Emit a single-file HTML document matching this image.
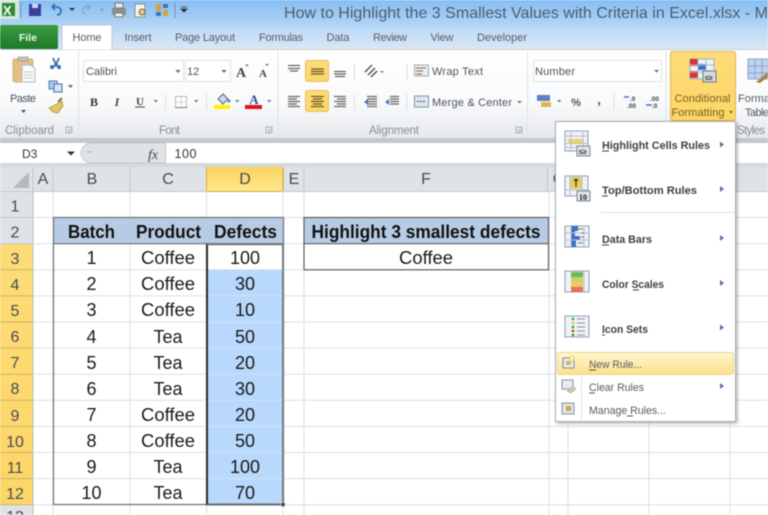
<!DOCTYPE html>
<html><head><meta charset="utf-8"><style>
html,body{margin:0;padding:0;background:#fff;overflow:hidden}
svg{display:block;filter:blur(.4px)}
text{font-family:"Liberation Sans",sans-serif}
.r{font-size:11px;fill:#4c535c}
.l{font-size:11.5px;fill:#8a9098}
.tab{font-size:11px;fill:#5a6068;text-anchor:middle}
.h{font-size:16px;fill:#444b53;text-anchor:middle}
.c{font-size:18px;fill:#1a1a1a;text-anchor:middle}
.b{font-size:18px;font-weight:bold;fill:#111;text-anchor:middle}
.m{font-size:11px;font-weight:bold;fill:#3c4148}
.n{font-size:11px;fill:#555b63}
.g{stroke:#dcdfe3;stroke-width:1;fill:none}
.ln{stroke:#666;stroke-width:1.2}
.ic{fill:#eef2f7;stroke:#8fa0b4}
.il{stroke:#b4c0ce;fill:none}
</style></head><body>
<svg width="768" height="515" viewBox="0 0 768 515" xmlns="http://www.w3.org/2000/svg">
<defs>
<linearGradient id="tb" x1="0" y1="0" x2="0" y2="1"><stop offset="0" stop-color="#86bef3"/><stop offset=".35" stop-color="#a3cdf5"/><stop offset=".65" stop-color="#c3dcf6"/><stop offset="1" stop-color="#dbe8f6"/></linearGradient>
<linearGradient id="rb" x1="0" y1="0" x2="0" y2="1"><stop offset="0" stop-color="#ffffff"/><stop offset=".6" stop-color="#f9fafb"/><stop offset="1" stop-color="#e6e9ed"/></linearGradient>
<linearGradient id="gold" x1="0" y1="0" x2="0" y2="1"><stop offset="0" stop-color="#fddc78"/><stop offset="1" stop-color="#fdd667"/></linearGradient>
<linearGradient id="gh" x1="0" y1="0" x2="0" y2="1"><stop offset="0" stop-color="#fcd25f"/><stop offset="1" stop-color="#ffe98d"/></linearGradient>
<linearGradient id="hv" x1="0" y1="0" x2="0" y2="1"><stop offset="0" stop-color="#fff6d2"/><stop offset="1" stop-color="#fde08a"/></linearGradient>
<linearGradient id="gr" x1="0" y1="0" x2="0" y2="1"><stop offset="0" stop-color="#3c9a3e"/><stop offset="1" stop-color="#1d7a2a"/></linearGradient>
<filter id="sh" x="-5%" y="-5%" width="115%" height="115%"><feDropShadow dx="1.5" dy="1.5" stdDeviation="1.5" flood-color="#000" flood-opacity=".3"/></filter>
</defs>

<!-- title + tabs background -->
<rect x="0" y="0" width="768" height="50" fill="url(#tb)"/>
<rect x="0" y="0" width="19" height="19" fill="#d8e8d8"/>
<rect x="2" y="3" width="13" height="13" fill="#2d8a3c"/>
<text x="3" y="15" font-size="13" font-weight="bold" fill="#fff">X</text>
<line x1="21" y1="2" x2="21" y2="18" stroke="#6e93b8"/>
<rect x="29" y="4" width="12" height="12" fill="#3b3f9c"/><rect x="32" y="4" width="6" height="4" fill="#cdd4ee"/>
<path d="M52 7 h5 a4 4 0 0 1 0 8 M52 7 l3-3 M52 7 l3 3" stroke="#3a6db5" stroke-width="1.8" fill="none"/>
<path d="M69 8 l6 0 l-3 3z" fill="#333"/>
<path d="M90 7 h-4 a3.5 3.5 0 0 0 0 7 M90 7 l-3-3 M90 7 l-3 3" stroke="#8ba6be" stroke-width="1.5" fill="none"/>
<path d="M100 9 l4 0 l-2 2z" fill="#7d93a8"/>
<rect x="112" y="8" width="14" height="7" fill="#8a8f96"/><rect x="115" y="3" width="8" height="5" fill="#e8e8e8" stroke="#777"/><rect x="115" y="13" width="8" height="4" fill="#eee" stroke="#777"/>
<rect x="135" y="4" width="10" height="13" fill="#f4f4f4" stroke="#8a8a8a"/><circle cx="142" cy="12" r="3" fill="#e5c884" stroke="#77654a"/>
<rect x="156" y="4" width="5" height="7" fill="#d6a23c"/><rect x="163" y="4" width="5" height="4" fill="#3f74b8"/><rect x="156" y="12" width="5" height="4" fill="#3f74b8"/><rect x="163" y="10" width="5" height="6" fill="#d6a23c"/>
<line x1="175" y1="3" x2="175" y2="18" stroke="#6e93b8"/>
<path d="M181 7 h6 M181 9 l6 0 l-3 3z" stroke="#333" fill="#333" stroke-width=".8"/>
<text x="284" y="18" font-size="16" fill="#4f5c6b" textLength="484" lengthAdjust="spacingAndGlyphs">How to Highlight the 3 Smallest Values with Criteria in Excel.xlsx  -  M</text>

<!-- tabs -->
<rect x="0" y="25" width="58" height="24" rx="2" fill="url(#gr)"/>
<text x="28" y="41" font-size="10.5" font-weight="bold" fill="#eef6ee" text-anchor="middle">File</text>
<path d="M62 50 V27 a2 2 0 0 1 2-2 H110 a2 2 0 0 1 2 2 V50z" fill="#fff" stroke="#bccad8"/>
<text class="tab" x="87" y="41" textLength="29">Home</text>
<text class="tab" x="138" y="41" textLength="27">Insert</text>
<text class="tab" x="205" y="41" textLength="60">Page Layout</text>
<text class="tab" x="281" y="41" textLength="44">Formulas</text>
<text class="tab" x="338" y="41" textLength="23">Data</text>
<text class="tab" x="390" y="41" textLength="34">Review</text>
<text class="tab" x="442" y="41" textLength="23">View</text>
<text class="tab" x="502" y="41" textLength="50">Developer</text>

<!-- ribbon -->
<rect x="0" y="50" width="768" height="88" fill="url(#rb)"/>
<line x1="112" y1="49.5" x2="768" y2="49.5" stroke="#c6ced6"/>
<line x1="0" y1="49.5" x2="62" y2="49.5" stroke="#c6ced6"/>
<rect x="0" y="138" width="768" height="5" fill="#c5c8cc"/>
<g stroke="#dfe2e6"><line x1="78.5" y1="51" x2="78.5" y2="137"/><line x1="278" y1="51" x2="278" y2="137"/><line x1="527.5" y1="51" x2="527.5" y2="137"/><line x1="666" y1="51" x2="666" y2="137"/></g>

<!-- clipboard -->
<rect x="13" y="59" width="20" height="23" rx="2" fill="#e6c083" stroke="#cdae78"/>
<rect x="18" y="57" width="10" height="4" fill="#bfc3c8" stroke="#8d8f92" stroke-width=".6"/>
<path d="M22 65 h9 l4 4 v13 h-13z" fill="#fafafa" stroke="#b4b8bd"/>
<g stroke="#c2c6cb"><line x1="24" y1="72" x2="33" y2="72"/><line x1="24" y1="75" x2="33" y2="75"/><line x1="24" y1="78" x2="33" y2="78"/></g>
<text class="r" x="23" y="102" text-anchor="middle" font-size="11.5" textLength="26">Paste</text>
<path d="M21 110 h5 l-2.500 3z" fill="#555"/>
<path d="M53 58 l3 7 l3-7 M52 69 l4-5 l4 5" stroke="#3d5f9f" stroke-width="1.6" fill="none"/>
<circle cx="52" cy="67" r="2" fill="#3d6fb5"/><circle cx="59" cy="67" r="2" fill="#3d6fb5"/>
<rect x="49" y="81" width="8" height="8" fill="#a9c6e6" stroke="#4f7fb5"/><rect x="54" y="84" width="8" height="8" fill="#d5e5f5" stroke="#3f6fae"/>
<path d="M68 85 h5 l-2.500 3z" fill="#666"/>
<path d="M49 108 l8-4 l5-3 l1 5 l-5 7 l-5-1z" fill="#e3c468" stroke="#a98d3f" stroke-width=".7"/>
<path d="M58 102 l4-4" stroke="#8a6f4a" stroke-width="2"/>
<text class="l" x="5" y="134" textLength="49" lengthAdjust="spacingAndGlyphs">Clipboard</text>
<path d="M66 127 h6 v6 h-6z M69 130 h3 v3 h-3z" fill="#e4e6e9" stroke="#9aa0a6" stroke-width=".7"/>

<!-- font -->
<rect x="83.500" y="60.500" width="100" height="21" fill="#fff" stroke="#dfe2e5"/>
<rect x="185.500" y="60.500" width="45" height="21" fill="#fff" stroke="#dfe2e5"/>
<text class="r" x="86" y="75" font-size="11.500" fill="#444" textLength="31">Calibri</text>
<text class="r" x="187" y="75" font-size="11.500" fill="#444">12</text>
<path d="M175.500 70 h5 l-2.500 3z M221.500 70 h5 l-2.500 3z" fill="#666"/>
<text x="241" y="77" font-size="14" font-weight="bold" fill="#444" text-anchor="middle" style="font-family:'Liberation Serif'">A</text>
<text x="263" y="77" font-size="11" font-weight="bold" fill="#444" text-anchor="middle" style="font-family:'Liberation Serif'">A</text>
<path d="M245 66 l2-2 l2 2z M265 64 l2 2 l2-2z" fill="#3a78c2"/>
<text x="94" y="106" font-size="12" font-weight="bold" fill="#333" text-anchor="middle" style="font-family:'Liberation Serif'">B</text>
<text x="117" y="106" font-size="12" font-weight="bold" font-style="italic" fill="#444" text-anchor="middle" style="font-family:'Liberation Serif'">I</text>
<text x="140" y="105" font-size="11" font-weight="bold" fill="#444" text-anchor="middle" style="font-family:'Liberation Serif'">U</text>
<line x1="135" y1="107" x2="145" y2="107" stroke="#444"/>
<path d="M153.500 100 h4.500 l-2.250 2.500z M194 100 h4.500 l-2.250 2.500z M235 100 h4.500 l-2.250 2.500z M267 100 h4.500 l-2.250 2.500z" fill="#777"/>
<g stroke="#dcdfe3"><line x1="165.500" y1="94" x2="165.500" y2="110"/><line x1="206.500" y1="94" x2="206.500" y2="110"/></g>
<rect x="175.500" y="96.500" width="11" height="11" fill="#fff" stroke="#b6bbc1"/><path d="M181 97 v10 M176 102 h10" stroke="#aab0b7" stroke-dasharray="1 1"/><line x1="175" y1="107.500" x2="187" y2="107.500" stroke="#777"/>
<path d="M218 99 l5-5 l5 5 l-5 5z" fill="#c9d7e6" stroke="#5a6a78"/><circle cx="229" cy="101" r="1.500" fill="#4a7fc0"/>
<rect x="214" y="105" width="16" height="4" fill="#fff200"/>
<text x="254" y="104" font-size="13" font-weight="bold" fill="#2b4f9e" text-anchor="middle" style="font-family:'Liberation Serif'">A</text>
<rect x="245" y="105" width="17" height="4" fill="#e8101c"/>
<text class="l" x="159" y="134" textLength="21">Font</text>
<path d="M266 127 h6 v6 h-6z M269 130 h3 v3 h-3z" fill="#e4e6e9" stroke="#9aa0a6" stroke-width=".7"/>

<!-- alignment -->
<rect x="305.500" y="60.500" width="23" height="21" rx="2" fill="url(#gold)" stroke="#e3bf6e"/>
<rect x="305.500" y="90.500" width="23" height="21" rx="2" fill="url(#gold)" stroke="#e3bf6e"/>
<g class="ln" stroke="#666" stroke-width="1.200">
<path d="M288 65.500h12M288 68.500h12M290 71h8"/>
<path d="M311 69h13M311 71.500h13M311 74h13" stroke="#6e5a24"/>
<path d="M334 71.500h12M334 74h12M335 76.500h10"/>
<path d="M288 96.500h12M288 99h9M288 101.500h12M288 104h9M288 106.500h12"/>
<path d="M311 96.500h13M313 99h9M311 101.500h13M313 104h9M311 106.500h13" stroke="#6e5a24"/>
<path d="M334 96.500h12M337 99h9M334 101.500h12M337 104h9M334 106.500h12"/>
<path d="M367 96.500h10M367 99h10M367 101.500h10M367 104h10M367 106.500h10M399 96.500h-9M399 99h-9M399 101.500h-9M399 104h-9"/>
</g>
<path d="M364 102 l4-3 v6z M389 99 l-4 3 l4 3z" fill="#3a78c2"/>
<line x1="354.500" y1="64" x2="354.500" y2="80" stroke="#dcdfe3"/><line x1="354.500" y1="94" x2="354.500" y2="110" stroke="#dcdfe3"/>
<line x1="407" y1="64" x2="407" y2="80" stroke="#dcdfe3"/><line x1="407" y1="94" x2="407" y2="110" stroke="#dcdfe3"/>
<path d="M365 72 l7-7 M368 75 l7-7 M371 77 l6-6" stroke="#555" stroke-width="1.500"/>
<path d="M380 71 h4 l-2 2z" fill="#777"/>
<rect x="414.500" y="65" width="14" height="11" fill="#e9edf2" stroke="#a0aab5"/><path d="M416 68h10M416 71h7M416 74h6" stroke="#8a6a3a"/>
<text class="r" x="432" y="75" font-size="11.500" textLength="51">Wrap Text</text>
<rect x="414.500" y="96" width="14" height="11" fill="#dfe7f0" stroke="#8296ac"/><path d="M417 101.500h8" stroke="#445" stroke-dasharray="2 1"/>
<text class="r" x="432" y="106" font-size="11.500" textLength="80">Merge &amp; Center</text>
<path d="M517 101 h5 l-2.500 2.500z" fill="#777"/>
<text class="l" x="369" y="134" textLength="50">Alignment</text>
<path d="M516 127 h6 v6 h-6z M519 130 h3 v3 h-3z" fill="#e4e6e9" stroke="#9aa0a6" stroke-width=".7"/>

<!-- number -->
<rect x="533.500" y="60.500" width="128" height="21" fill="#fff" stroke="#dfe2e5"/>
<text class="r" x="535" y="75" font-size="11.500" fill="#444" textLength="40">Number</text>
<path d="M654 70 h5 l-2.500 2.500z" fill="#666"/>
<rect x="537" y="95" width="13" height="6" fill="#5a82c4"/><rect x="541" y="102" width="10" height="5" fill="#e2b44a"/>
<path d="M557 100 h4.500 l-2.250 2.500z" fill="#777"/>
<text x="576" y="106" font-size="11" font-weight="bold" fill="#555" text-anchor="middle">%</text>
<text x="599" y="104" font-size="13" font-weight="bold" fill="#444" text-anchor="middle">,</text>
<line x1="614" y1="94" x2="614" y2="110" stroke="#dcdfe3"/>
<text x="630" y="101" font-size="6.500" font-weight="bold" fill="#444">.0</text><text x="627" y="108" font-size="6.500" font-weight="bold" fill="#444">.00</text>
<text x="650" y="101" font-size="6.500" font-weight="bold" fill="#444">.00</text><text x="652" y="108" font-size="6.500" font-weight="bold" fill="#444">.0</text>
<path d="M624 97 h5 M646 105 h6" stroke="#3a78c2" stroke-width="1.500"/>

<!-- styles -->
<rect x="670.500" y="51.500" width="65" height="69" rx="2" fill="url(#gold)" stroke="#dbb45c"/>
<g>
<rect x="690" y="59" width="24" height="20" fill="#eef2f7" stroke="#9fb0c4"/>
<rect x="690" y="59" width="8" height="7" fill="#d8323a"/><rect x="698" y="64" width="8" height="6" fill="#3a72c8"/><rect x="690" y="71" width="8" height="7" fill="#d8323a"/>
<path d="M698 59v20M706 59v20M690 65h24M690 72h24" stroke="#a9b8c9" fill="none"/>
<rect x="703" y="71" width="13" height="11" fill="#d6dbe2" stroke="#6c7883"/>
<text x="705" y="80" font-size="7" font-weight="bold" fill="#333">≤≥</text>
</g>
<text x="702.500" y="102" font-size="11" fill="#7a5f1e" text-anchor="middle" textLength="56">Conditional</text>
<text x="698" y="116" font-size="11" fill="#7a5f1e" text-anchor="middle" textLength="53">Formatting</text>
<path d="M729 111 h4 l-2 2.500z" fill="#7a5f1e"/>
<rect x="748" y="59" width="20" height="20" fill="#bcd2f0" stroke="#8ea6c8"/><path d="M748 66h20M748 73h20M755 59v20M762 59v20" stroke="#8ea5c5"/>
<path d="M756 82 l12-10 v5 l-8 6z" fill="#a98344"/>
<text x="738" y="102" font-size="11" fill="#555b63" textLength="32">Forma</text>
<text x="745" y="116" font-size="11" fill="#555b63" textLength="24">Table</text>
<text class="l" x="737" y="134" textLength="28">Styles</text>

<!-- formula bar -->
<rect x="0" y="143" width="768" height="20" fill="#fff"/>
<rect x="0" y="163" width="768" height="4" fill="#d6d9dc"/>
<text x="22" y="158" font-size="12" fill="#333">D3</text>
<path d="M67 151.500 h8 l-4 4z" fill="#333"/>
<path d="M165.500 143 H92 a11 10 0 0 0 -11 10 a11 10 0 0 0 11 10 H165.500z" fill="#e0e3e6" stroke="#c2c6ca"/>
<path d="M87 152 h5" stroke="#b5babf" stroke-width="1.500"/>
<text x="148" y="159" font-size="14" font-style="italic" fill="#444" style="font-family:'Liberation Serif'">fx</text>
<text x="174.500" y="158" font-size="12.500" fill="#333" textLength="22">100</text>

<!-- sheet -->
<rect x="0" y="167" width="768" height="24.500" fill="#dfe3e8"/>
<rect x="0" y="191.500" width="33" height="323.500" fill="#dfe3e8"/>
<rect x="206.500" y="167" width="76.500" height="24.500" fill="url(#gh)"/>
<rect x="0" y="243.700" width="33" height="261" fill="url(#gold)"/>
<path d="M13 188 h16 v-16z" fill="#b5b9bf"/>
<g stroke="#c3c7cc"><line x1="33" y1="167" x2="33" y2="191"/><line x1="53" y1="167" x2="53" y2="191"/><line x1="130" y1="167" x2="130" y2="191"/><line x1="283.500" y1="167" x2="283.500" y2="191"/><line x1="304" y1="167" x2="304" y2="191"/><line x1="547.500" y1="167" x2="547.500" y2="191"/><line x1="0" y1="191.500" x2="768" y2="191.500"/></g>
<line x1="206.500" y1="167" x2="206.500" y2="191" stroke="#d9a93d"/><line x1="283" y1="167" x2="283" y2="191" stroke="#d9a93d"/><line x1="206" y1="191.500" x2="283" y2="191.500" stroke="#d9a93d"/>
<line x1="33" y1="191" x2="33" y2="515" stroke="#b9bcc0"/>
<g stroke="#cfb26a"><line x1="0" y1="269.800" x2="33" y2="269.800"/><line x1="0" y1="295.900" x2="33" y2="295.900"/><line x1="0" y1="322" x2="33" y2="322"/><line x1="0" y1="348.100" x2="33" y2="348.100"/><line x1="0" y1="374.200" x2="33" y2="374.200"/><line x1="0" y1="400.300" x2="33" y2="400.300"/><line x1="0" y1="426.400" x2="33" y2="426.400"/><line x1="0" y1="452.500" x2="33" y2="452.500"/><line x1="0" y1="478.600" x2="33" y2="478.600"/><line x1="0" y1="504.700" x2="33" y2="504.700"/></g>
<line x1="0" y1="217.500" x2="33" y2="217.500" stroke="#c3c7cc"/><line x1="0" y1="243.700" x2="33" y2="243.700" stroke="#c3c7cc"/>

<!-- gridlines -->
<path class="g" d="M33 217.500H768M33 243.700H768M33 269.800H768M33 295.900H768M33 322H768M33 348.100H768M33 374.200H768M33 400.300H768M33 426.400H768M33 452.500H768M33 478.600H768M33 504.700H768"/>
<path class="g" d="M53 191V515M130 191V515M206.500 191V515M283 191V515M304 191V515M549 191V515M568 191V515M649 191V515M730 191V515"/>

<!-- selection fill -->
<rect x="207" y="270" width="76" height="235" fill="#b8d8fc"/>
<path d="M207 295.900H283M207 322H283M207 348.100H283M207 374.200H283M207 400.300H283M207 426.400H283M207 452.500H283M207 478.600H283" stroke="#cfe2f8"/>
<!-- header rows -->
<rect x="53" y="217.500" width="230" height="26.200" fill="#b7cce4"/>
<rect x="304" y="217.500" width="244.500" height="26.200" fill="#b7cce4"/>
<!-- borders -->
<rect x="53.500" y="217.500" width="230" height="287" fill="none" stroke="#6f7173" stroke-width="1.200"/>
<line x1="53" y1="243.700" x2="283" y2="243.700" stroke="#6f7173" stroke-width="1.200"/>
<rect x="304" y="217.500" width="244.500" height="52.300" fill="none" stroke="#5e6062" stroke-width="1.200"/>
<line x1="304" y1="243.700" x2="548" y2="243.700" stroke="#5e6062" stroke-width="1.200"/>
<rect x="207" y="244.300" width="76" height="260.300" fill="none" stroke="#4a4a4a" stroke-width="1.500"/>
<line x1="207" y1="244" x2="207" y2="505" stroke="#2a2a2a" stroke-width="2"/>
<line x1="283" y1="244" x2="283" y2="505" stroke="#7a7a7a" stroke-width="2"/>
<line x1="207" y1="504.500" x2="283" y2="504.500" stroke="#6a6a6a" stroke-width="2"/>
<line x1="207" y1="244.500" x2="283" y2="244.500" stroke="#7a7a7a" stroke-width="1.500"/>
<rect x="281" y="502.500" width="4" height="4" fill="#444" stroke="#fff" stroke-width=".5"/>

<!-- headers -->
<text class="h" x="43" y="184">A</text><text class="h" x="92" y="184">B</text><text class="h" x="168" y="184">C</text><text class="h" x="245" y="184">D</text><text class="h" x="294" y="184">E</text><text class="h" x="426" y="184">F</text><text class="h" x="559" y="184">G</text>
<text class="h" x="15" y="211.500">1</text><text class="h" x="15" y="237.500">2</text><text class="h" x="15" y="264">3</text><text class="h" x="15" y="290">4</text><text class="h" x="15" y="316">5</text><text class="h" x="15" y="342">6</text><text class="h" x="15" y="368">7</text><text class="h" x="15" y="394">8</text><text class="h" x="15" y="421">9</text><text class="h" x="15" y="447">10</text><text class="h" x="15" y="473">11</text><text class="h" x="15" y="499">12</text><text class="h" x="15" y="522">13</text>

<!-- cells -->
<text class="b" x="91.500" y="238" textLength="47" lengthAdjust="spacingAndGlyphs">Batch</text>
<text class="b" x="168.500" y="238" textLength="65" lengthAdjust="spacingAndGlyphs">Product</text>
<text class="b" x="245.500" y="238" textLength="63" lengthAdjust="spacingAndGlyphs">Defects</text>
<text class="b" x="426" y="238" textLength="229" lengthAdjust="spacingAndGlyphs">Highlight 3 smallest defects</text>
<text class="c" x="426" y="264" textLength="54" lengthAdjust="spacingAndGlyphs">Coffee</text>

<text class="c" x="91.500" y="264">1</text><text class="c" x="168" y="264" textLength="54" lengthAdjust="spacingAndGlyphs">Coffee</text><text class="c" x="245" y="264" textLength="30">100</text>
<text class="c" x="91.500" y="290">2</text><text class="c" x="168" y="290" textLength="54" lengthAdjust="spacingAndGlyphs">Coffee</text><text class="c" x="245" y="290" textLength="20">30</text>
<text class="c" x="91.500" y="316">3</text><text class="c" x="168" y="316" textLength="54" lengthAdjust="spacingAndGlyphs">Coffee</text><text class="c" x="245" y="316" textLength="20">10</text>
<text class="c" x="91.500" y="343">4</text><text class="c" x="168" y="343" textLength="29" lengthAdjust="spacingAndGlyphs">Tea</text><text class="c" x="245" y="343" textLength="20">50</text>
<text class="c" x="91.500" y="369">5</text><text class="c" x="168" y="369" textLength="29" lengthAdjust="spacingAndGlyphs">Tea</text><text class="c" x="245" y="369" textLength="20">20</text>
<text class="c" x="91.500" y="395">6</text><text class="c" x="168" y="395" textLength="29" lengthAdjust="spacingAndGlyphs">Tea</text><text class="c" x="245" y="395" textLength="20">30</text>
<text class="c" x="91.500" y="421">7</text><text class="c" x="168" y="421" textLength="54" lengthAdjust="spacingAndGlyphs">Coffee</text><text class="c" x="245" y="421" textLength="20">20</text>
<text class="c" x="91.500" y="447">8</text><text class="c" x="168" y="447" textLength="54" lengthAdjust="spacingAndGlyphs">Coffee</text><text class="c" x="245" y="447" textLength="20">50</text>
<text class="c" x="91.500" y="473">9</text><text class="c" x="168" y="473" textLength="29" lengthAdjust="spacingAndGlyphs">Tea</text><text class="c" x="245" y="473" textLength="30">100</text>
<text class="c" x="91.500" y="499" textLength="20">10</text><text class="c" x="168" y="499" textLength="29" lengthAdjust="spacingAndGlyphs">Tea</text><text class="c" x="245" y="499" textLength="20">70</text>

<!-- menu -->
<rect x="555.500" y="121.500" width="180" height="300" fill="#fff" stroke="#a8acb1" filter="url(#sh)"/>
<!-- highlight icon -->
<rect class="ic" x="565" y="131" width="23" height="20"/><rect x="568" y="139" width="15" height="4" fill="#f4d25e"/><path class="il" d="M565 136h23M565 143.500h23M565 147.500h23M571 131v20M583 131v20"/>
<rect x="577" y="146" width="13" height="10" fill="#dfe3e8" stroke="#7f8a96"/><text x="579" y="154" font-size="7" font-weight="bold" fill="#333">≤≥</text>
<!-- top bottom -->
<rect class="ic" x="565" y="176" width="23" height="20"/><rect x="570" y="177" width="12" height="12" fill="#eacb62"/><path class="il" d="M565 190h23M570 176v20M582 176v20"/><path d="M576 187 v-8 M574 181 l2-2 l2 2" stroke="#222" fill="none"/>
<rect x="577" y="191" width="13" height="10" fill="#dfe3e8" stroke="#7f8a96"/><text x="579" y="200" font-size="8" font-weight="bold" fill="#222" style="font-family:'Liberation Serif'">10</text>
<!-- data bars -->
<rect class="ic" x="565" y="226" width="24" height="21"/>
<path d="M571 226h7v5h-3v5h5v4h-4v7h-5z" fill="#3f72c8"/><path class="il" d="M565 233h24M565 240h24M571 226v21M584 226v21"/><path d="M578 229h5M581 233h3M581 237h3M578 243h5" stroke="#777"/>
<!-- color scales -->
<rect class="ic" x="565" y="271" width="24" height="21"/>
<rect x="571" y="272" width="12" height="5" fill="#6fb85e"/><rect x="571" y="277" width="12" height="5" fill="#c6d36a"/><rect x="571" y="282" width="12" height="5" fill="#f2c75e"/><rect x="571" y="287" width="12" height="5" fill="#e8705a"/>
<path d="M584 271v21" class="il"/>
<!-- icon sets -->
<rect class="ic" x="565" y="316" width="24" height="21"/>
<circle cx="573" cy="319" r="1.400" fill="#39a845"/><circle cx="573" cy="323" r="1.400" fill="#e8c52e"/><circle cx="573" cy="327" r="1.400" fill="#39a845"/><circle cx="573" cy="331" r="1.400" fill="#d8382e"/><circle cx="573" cy="335" r="1.400" fill="#39a845"/>
<path d="M577 319h8M577 323h8M577 327h8M577 331h8M577 335h8" stroke="#8a9199"/>

<text class="m" x="602" y="149" textLength="108" lengthAdjust="spacingAndGlyphs">Highlight Cells Rules</text><line x1="602" y1="151" x2="609" y2="151" stroke="#3c4148"/>
<text class="m" x="602" y="194" textLength="95" lengthAdjust="spacingAndGlyphs">Top/Bottom Rules</text><line x1="602" y1="196" x2="608" y2="196" stroke="#3c4148"/>
<line x1="601" y1="212.500" x2="734" y2="212.500" stroke="#c4c6c9" stroke-dasharray="1 1"/>
<text class="m" x="602" y="243" textLength="50" lengthAdjust="spacingAndGlyphs">Data Bars</text><line x1="602" y1="245" x2="609" y2="245" stroke="#3c4148"/>
<text class="m" x="602" y="288" textLength="62" lengthAdjust="spacingAndGlyphs">Color Scales</text><line x1="633" y1="290" x2="639" y2="290" stroke="#3c4148"/>
<text class="m" x="602" y="333" textLength="46" lengthAdjust="spacingAndGlyphs">Icon Sets</text><line x1="602" y1="335" x2="605" y2="335" stroke="#3c4148"/>
<path d="M720 141.500l4 3l-4 3zM720 186l4 3l-4 3zM720 235l4 3l-4 3zM720 280l4 3l-4 3zM720 324.500l4 3l-4 3zM720 383l4 3l-4 3z" fill="#4f74a6"/>

<rect x="557.500" y="352.500" width="176" height="22" rx="2" fill="url(#hv)" stroke="#ecd48a"/>
<line x1="581.500" y1="375" x2="581.500" y2="420" stroke="#e2e4e7"/>
<rect x="563" y="358" width="11" height="10" fill="#e8ecf2" stroke="#7f8a96"/><rect x="566" y="361" width="5" height="4" fill="#d9b84e"/><rect x="570" y="356" width="4" height="4" fill="#fff3b8" stroke="#e6c65e" stroke-width=".6"/>
<rect x="562" y="380" width="11" height="9" fill="#e8ecf2" stroke="#8a939e"/><path d="M567 391 l6-5 l3 3 l-5 4z" fill="#d8c8a8" stroke="#888" stroke-width=".5"/>
<rect x="562" y="403" width="12" height="11" fill="#dfe4ea" stroke="#8a939e"/><rect x="566" y="406" width="5" height="5" fill="#c9a850"/>
<text class="n" x="589" y="368" fill="#5b5640" textLength="53" lengthAdjust="spacingAndGlyphs">New Rule...</text><line x1="589" y1="370" x2="596" y2="370" stroke="#555"/>
<text class="n" x="589" y="391" textLength="55" lengthAdjust="spacingAndGlyphs">Clear Rules</text><line x1="589" y1="393" x2="595" y2="393" stroke="#555"/>
<text class="n" x="589" y="414" textLength="77" lengthAdjust="spacingAndGlyphs">Manage Rules...</text><line x1="627" y1="416" x2="633" y2="416" stroke="#555"/>
</svg>
</body></html>
